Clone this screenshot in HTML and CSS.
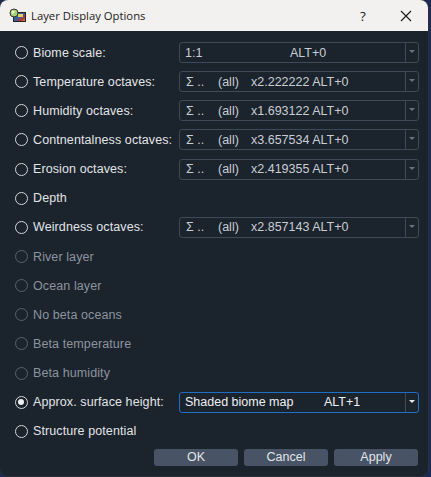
FILE: index.html
```html
<!DOCTYPE html>
<html>
<head>
<meta charset="utf-8">
<link rel="stylesheet" href="styles.css">
</head>
<body>
<div class="window">
  <div class="titlebar">
    <svg class="app-icon" width="17" height="15" viewBox="0 0 17 15">
      <defs>
        <linearGradient id="map" x1="0" y1="0" x2="1" y2="1">
          <stop offset="0" stop-color="#3c8f3a"/>
          <stop offset="0.45" stop-color="#2f5fb8"/>
          <stop offset="0.75" stop-color="#b33b2e"/>
          <stop offset="1" stop-color="#d9b640"/>
        </linearGradient>
      </defs>
      <rect x="4.5" y="4.5" width="12" height="9" fill="url(#map)" stroke="#222" stroke-width="1"/>
      <rect x="9" y="6" width="5" height="3" fill="#e0d060"/>
      <circle cx="5" cy="5" r="4" fill="#a8d27a" stroke="#333" stroke-width="1"/>
      <circle cx="4" cy="4" r="1.5" fill="#e8f5c8"/>
    </svg>
    <span class="title">Layer Display Options</span>
    <span class="help">?</span>
    <svg class="close" width="12" height="12" viewBox="0 0 12 12">
      <path d="M1 1L11 11M11 1L1 11" stroke="#1a1a1a" stroke-width="1.1"/>
    </svg>
  </div>

  <div class="content">
    <div class="rows">
      <div class="row">
        <label class="radio"><span class="dot"></span>Biome scale:</label>
        <div class="combo"><span class="c-val">1:1</span><span class="c-key-biome">ALT+0</span><span class="arrow"></span></div>
      </div>
      <div class="row">
        <label class="radio"><span class="dot"></span>Temperature octaves:</label>
        <div class="combo"><span class="c-sum">Σ ..</span><span class="c-all">(all)</span><span class="c-mul">x2.222222 ALT+0</span><span class="arrow"></span></div>
      </div>
      <div class="row">
        <label class="radio"><span class="dot"></span>Humidity octaves:</label>
        <div class="combo"><span class="c-sum">Σ ..</span><span class="c-all">(all)</span><span class="c-mul">x1.693122 ALT+0</span><span class="arrow"></span></div>
      </div>
      <div class="row">
        <label class="radio"><span class="dot"></span>Contnentalness octaves:</label>
        <div class="combo"><span class="c-sum">Σ ..</span><span class="c-all">(all)</span><span class="c-mul">x3.657534 ALT+0</span><span class="arrow"></span></div>
      </div>
      <div class="row">
        <label class="radio"><span class="dot"></span>Erosion octaves:</label>
        <div class="combo"><span class="c-sum">Σ ..</span><span class="c-all">(all)</span><span class="c-mul">x2.419355 ALT+0</span><span class="arrow"></span></div>
      </div>
      <div class="row">
        <label class="radio"><span class="dot"></span>Depth</label>
      </div>
      <div class="row">
        <label class="radio"><span class="dot"></span>Weirdness octaves:</label>
        <div class="combo"><span class="c-sum">Σ ..</span><span class="c-all">(all)</span><span class="c-mul">x2.857143 ALT+0</span><span class="arrow"></span></div>
      </div>
      <div class="row">
        <label class="radio disabled"><span class="dot"></span>River layer</label>
      </div>
      <div class="row">
        <label class="radio disabled"><span class="dot"></span>Ocean layer</label>
      </div>
      <div class="row">
        <label class="radio disabled"><span class="dot"></span>No beta oceans</label>
      </div>
      <div class="row">
        <label class="radio disabled"><span class="dot"></span>Beta temperature</label>
      </div>
      <div class="row">
        <label class="radio disabled"><span class="dot"></span>Beta humidity</label>
      </div>
      <div class="row">
        <label class="radio checked"><span class="dot"></span>Approx. surface height:</label>
        <div class="combo active"><span class="c-val-wide">Shaded biome map</span><span>ALT+1</span><span class="arrow"></span></div>
      </div>
      <div class="row">
        <label class="radio"><span class="dot"></span>Structure potential</label>
      </div>
    </div>

    <div class="buttons">
      <button class="btn">OK</button>
      <button class="btn">Cancel</button>
      <button class="btn">Apply</button>
    </div>
  </div>
</div>
</body>
</html>
```

FILE: styles.css
```css
* {
  box-sizing: border-box;
}

html, body {
  margin: 0;
  padding: 0;
  height: 100%;
}

body {
  background: #1d2a55;
  font-family: "Liberation Sans", Arial, sans-serif;
  overflow: hidden;
}

.window {
  width: 428px;
  height: 476px;
  background: #1b232d;
  border-radius: 8px;
  overflow: hidden;
  display: flex;
  flex-direction: column;
  box-shadow: 0 0 0 1px #2a313a;
}

/* title bar */
.titlebar {
  height: 31px;
  flex: none;
  background: #f3f0f0;
  display: flex;
  align-items: center;
  padding-left: 9px;
  color: #1a1a1a;
}

.app-icon {
  flex: none;
  margin-top: -1px;
}

.title {
  font-family: "Open Sans", "Noto Sans", sans-serif;
  font-size: 11.3px;
  margin-left: 5px;
  flex: 1;
}

.help {
  font-family: "Open Sans", "Noto Sans", sans-serif;
  font-size: 13.5px;
  width: 10px;
  margin-right: 30px;
}

.close {
  margin-right: 16px;
}

/* dialog body */
.content {
  flex: 1;
  display: flex;
  flex-direction: column;
  padding: 7px 10px 0 15px;
}

.rows {
  display: grid;
  grid-auto-rows: 29.15px;
}

.row {
  display: flex;
  align-items: center;
  justify-content: space-between;
}

.radio {
  display: flex;
  align-items: center;
  gap: 5px;
  font-size: 12.5px;
  color: #e2e5e8;
  letter-spacing: 0.1px;
}

.radio.disabled {
  color: #8d949d;
}

.dot {
  width: 13px;
  height: 13px;
  border-radius: 50%;
  border: 1.3px solid #d3d7dc;
  flex: none;
  position: relative;
}

.radio.disabled .dot {
  border-color: #59616c;
}

.radio.checked .dot::after {
  content: "";
  position: absolute;
  left: 2px;
  top: 2px;
  width: 6.4px;
  height: 6.4px;
  border-radius: 50%;
  background: #eceef0;
}

/* combo boxes */
.combo {
  width: 240px;
  height: 21px;
  border: 1px solid #3f4a58;
  border-radius: 3px;
  display: flex;
  align-items: center;
  padding-left: 5px;
  font-size: 12.5px;
  color: #c9ced4;
  position: relative;
  margin-right: -1px;
}

.combo .c-val {
  width: 105px;
}

.combo .c-key-biome {
  flex: none;
}

.combo .c-sum {
  width: 33px;
  padding-left: 1px;
}

.combo .c-all {
  width: 33px;
}

.combo .c-val-wide {
  width: 139px;
  color: #eef0f2;
}

.combo.active {
  border-color: #1f6fc5;
  color: #eef0f2;
}

.arrow {
  position: absolute;
  right: 0;
  top: 0;
  bottom: 0;
  width: 13px;
  border-left: 1px solid #3f4a58;
}

.arrow::after {
  content: "";
  position: absolute;
  left: 3px;
  top: 7px;
  border-left: 3.5px solid transparent;
  border-right: 3.5px solid transparent;
  border-top: 3.5px solid #6a737e;
}

.combo.active .arrow::after {
  border-top-color: #e8eaed;
}

/* dialog buttons */
.buttons {
  display: flex;
  justify-content: flex-end;
  gap: 6px;
  margin-top: 3px;
}

.btn {
  width: 84px;
  height: 17px;
  border: none;
  border-radius: 3px;
  background: #485365;
  color: #e3e6ea;
  font-family: "Liberation Sans", Arial, sans-serif;
  font-size: 12.5px;
  padding: 0;
}
```
